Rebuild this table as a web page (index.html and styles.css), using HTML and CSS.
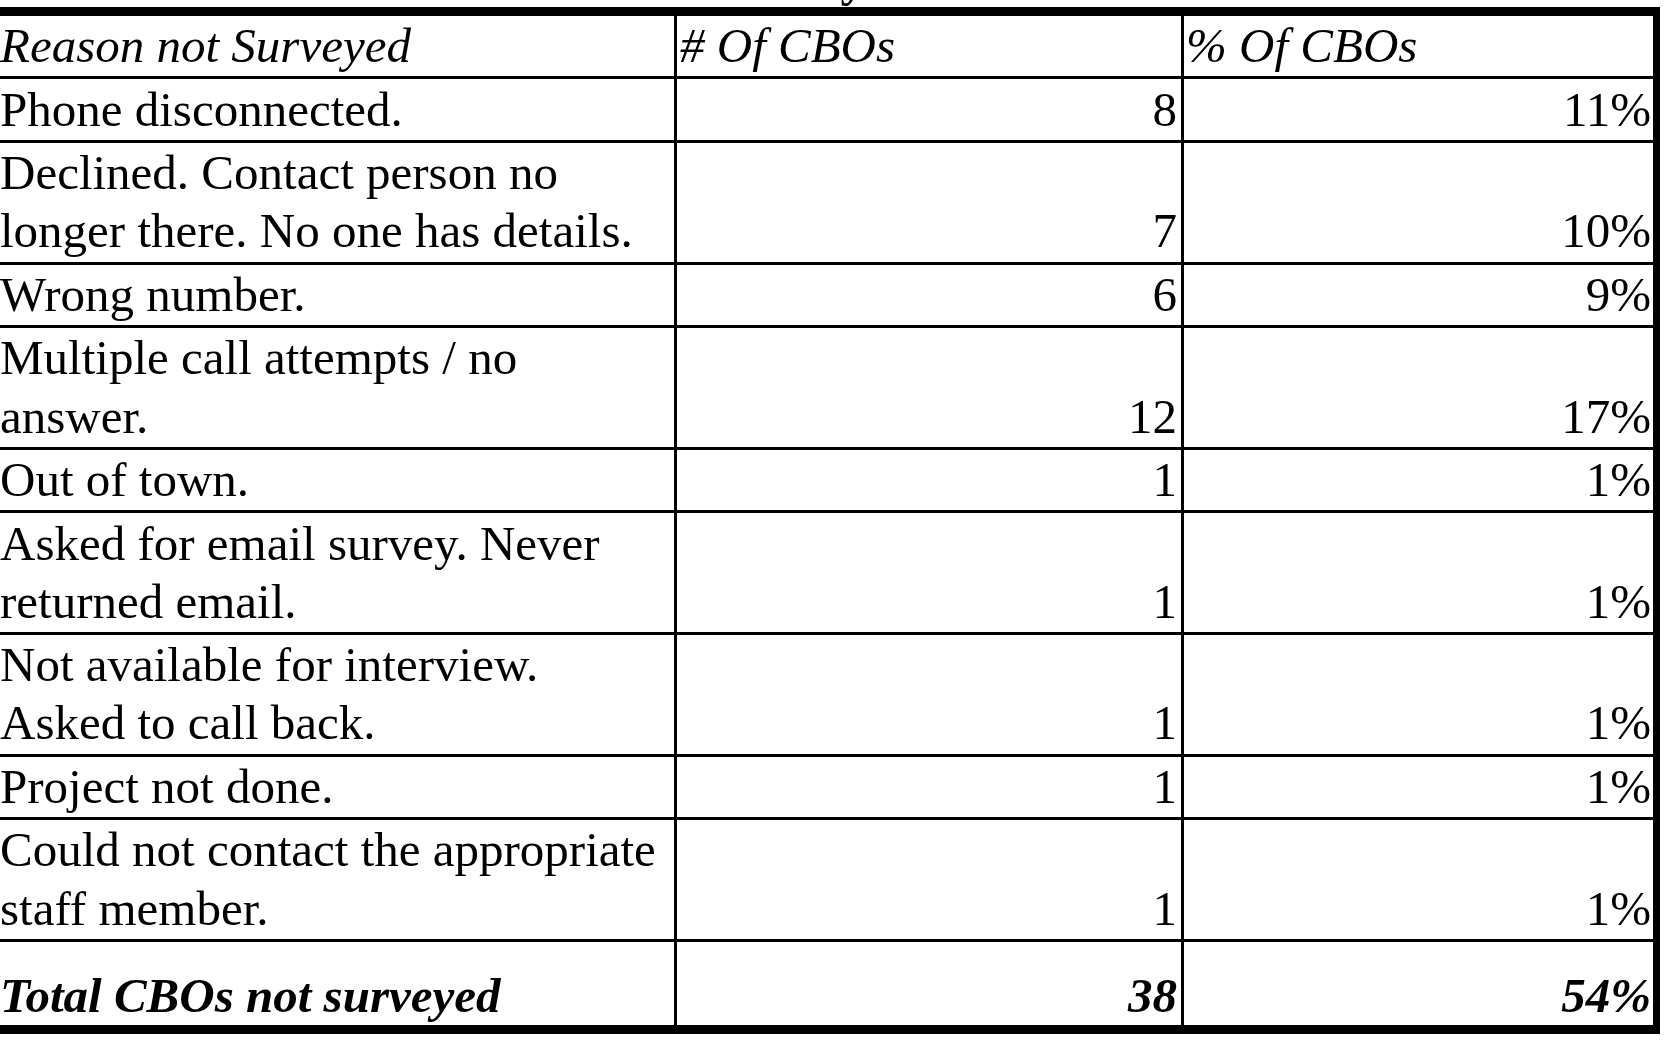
FILE: index.html
```html
<!DOCTYPE html>
<html lang="en">
<head>
<meta charset="utf-8">
<title>CBOs Not Surveyed</title>
<link rel="stylesheet" href="styles.css">
</head>
<body>
<div class="title"><span class="title-text">CBOs Not Surveyed</span></div>
<table class="report">
  <colgroup>
    <col class="c-reason">
    <col class="c-count">
    <col class="c-pct">
  </colgroup>
  <thead>
    <tr>
      <th class="reason">Reason not Surveyed</th>
      <th class="count"># Of CBOs</th>
      <th class="pct">% Of CBOs</th>
    </tr>
  </thead>
  <tbody>
    <tr><td class="reason">Phone disconnected.</td><td class="count">8</td><td class="pct">11%</td></tr>
    <tr><td class="reason">Declined. Contact person no longer there. No one has details.</td><td class="count">7</td><td class="pct">10%</td></tr>
    <tr><td class="reason">Wrong number.</td><td class="count">6</td><td class="pct">9%</td></tr>
    <tr><td class="reason">Multiple call attempts / no answer.</td><td class="count">12</td><td class="pct">17%</td></tr>
    <tr><td class="reason">Out of town.</td><td class="count">1</td><td class="pct">1%</td></tr>
    <tr><td class="reason">Asked for email survey. Never returned email.</td><td class="count">1</td><td class="pct">1%</td></tr>
    <tr><td class="reason">Not available for interview. Asked to call back.</td><td class="count">1</td><td class="pct">1%</td></tr>
    <tr><td class="reason">Project not done.</td><td class="count">1</td><td class="pct">1%</td></tr>
    <tr><td class="reason">Could not contact the appropriate staff member.</td><td class="count">1</td><td class="pct">1%</td></tr>
    <tr class="total"><td class="reason">Total CBOs not surveyed</td><td class="count">38</td><td class="pct">54%</td></tr>
  </tbody>
</table>
</body>
</html>
```
FILE: styles.css
```css
html, body {
  margin: 0;
  padding: 0;
  background: #ffffff;
}

body {
  font-family: "Liberation Serif", "Times New Roman", serif;
  color: #000000;
  overflow: hidden;
}

.title {
  display: flow-root;
  height: 7px;
  padding-left: 492px;
}

.title-text {
  display: block;
  font-weight: bold;
  font-size: 49px;
  line-height: 49px;
  margin-top: -45px;
  white-space: nowrap;
}

.report {
  border-collapse: separate;
  border-spacing: 0;
  table-layout: fixed;
  width: 1660px;
  border-top: 9px solid #000;
  border-right: 7px solid #000;
  border-bottom: 9px solid #000;
  font-size: 49px;
  line-height: 58.2px;
}

.c-reason { width: 677px; }
.c-count { width: 507px; }
.c-pct { width: 469px; }

.report th,
.report td {
  box-sizing: border-box;
  padding: 1.2px 0 1.1px 0;
  vertical-align: bottom;
  border-bottom: 3px solid #000;
  font-weight: normal;
  text-align: left;
}

.report tbody tr:last-child td {
  border-bottom: none;
}

.report th {
  font-style: italic;
}

.report .reason {
  border-right: 3px solid #000;
  padding-left: 0;
  padding-right: 2px;
}

.report .count {
  border-right: 3px solid #000;
  padding-left: 3px;
  padding-right: 4px;
}

.report .pct {
  padding-left: 2px;
  padding-right: 2px;
}

.report td.count,
.report td.pct {
  text-align: right;
}

.report .total td {
  height: 83px;
  font-weight: bold;
  font-style: italic;
  padding-bottom: 0;
}
```
